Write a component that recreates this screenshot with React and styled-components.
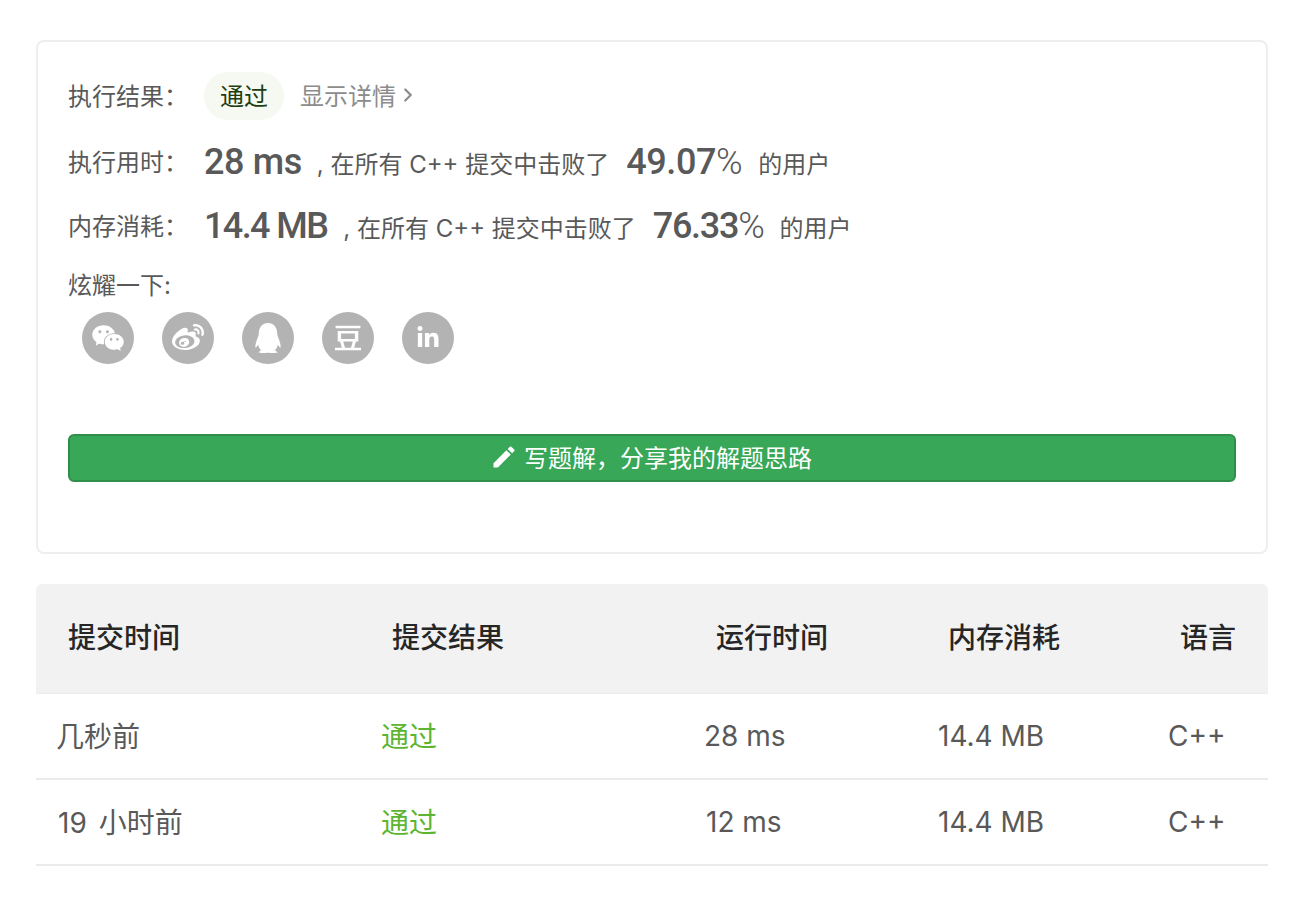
import React from 'react'
import styled, { createGlobalStyle } from 'styled-components'
import { AiFillWechat } from 'react-icons/ai'
import { FaWeibo, FaQq, FaLinkedinIn } from 'react-icons/fa'
import { SiDouban } from 'react-icons/si'
import { MdEdit } from 'react-icons/md'
import { ChevronRight } from 'lucide-react'

const GlobalStyle = createGlobalStyle`
  html, body {
    margin: 0;
    background: #fff;
  }
  body {
    font-family: "Inter", "Noto Sans CJK SC", sans-serif;
    color: #595959;
  }
`

const Page = styled.div`
  width: 1232px;
  padding: 40px 34px 0 36px;
`

const ResultCard = styled.section`
  box-sizing: border-box;
  height: 514px;
  padding: 30px 30px 0;
  border: 2px solid #eeeeee;
  border-radius: 8px;
`

const Row = styled.div`
  display: flex;
  align-items: center;
  height: ${({ $h }) => $h}px;
  margin-bottom: ${({ $mb }) => $mb || 0}px;
`

const Label = styled.span`
  width: 136px;
  flex: none;
  padding-bottom: 3px;
  font-size: 24px;
  color: #595959;
`

const Bubble = styled.span`
  display: flex;
  align-items: center;
  justify-content: center;
  box-sizing: border-box;
  width: 80px;
  height: 48px;
  padding-bottom: 3px;
  border-radius: 24px;
  background: #f6f9f2;
  color: #1d3d10;
  font-size: 24px;
`

const Detail = styled.span`
  display: flex;
  align-items: center;
  margin-left: 16px;
  padding-bottom: 3px;
  font-size: 24px;
  color: #8c8c8c;

  svg {
    margin-left: 1px;
  }
`

const Big = styled.b`
  font-family: "Roboto", "Noto Sans CJK SC", sans-serif;
  font-size: 36px;
  font-weight: 500;
  color: #595959;
  letter-spacing: ${({ $ls }) => $ls}px;
  margin-right: ${({ $mr }) => $mr}px;
`

const Percent = styled.span`
  font-weight: 300;
`

const Small = styled.span`
  font-size: 24px;
  color: #595959;
  margin-right: ${({ $mr }) => $mr || 0}px;
`

const ShareTitle = styled.div`
  font-size: 24px;
  height: 34px;
  line-height: 34px;
  color: #595959;
`

const Socials = styled.div`
  display: flex;
  gap: 28px;
  margin: 9px 0 70px 14px;
`

const Social = styled.span`
  display: flex;
  align-items: center;
  justify-content: center;
  width: 52px;
  height: 52px;
  border-radius: 50%;
  background: #b3b3b3;
  color: #fff;
  font-size: ${({ $size }) => $size}px;
`

const WriteButton = styled.button`
  display: flex;
  align-items: center;
  justify-content: center;
  gap: 6px;
  box-sizing: border-box;
  width: 1168px;
  height: 48px;
  padding: 0 2px 3px 0;
  background: #38a757;
  border: 2px solid #2f8e4a;
  border-radius: 6px;
  color: #fff;
  font-family: inherit;
  font-size: 24px;
`

const Table = styled.div`
  margin-top: 30px;
`

const Grid = styled.div`
  display: grid;
  grid-template-columns: 324px 324px 232px 232px 120px;
  align-items: center;
`

const HeadRow = styled(Grid)`
  height: 110px;
  background: #f2f2f2;
  border-bottom: 1px solid #ebebeb;
  border-radius: 6px 6px 0 0;
  box-sizing: border-box;
  font-size: 28px;
  font-weight: 500;
  color: #262626;
`

const HeadCell = styled.div`
  padding: 0 0 5px 32px;
`

const BodyRow = styled(Grid)`
  height: 86px;
  border-bottom: 2px solid #ebebeb;
  box-sizing: border-box;
  font-size: 28px;
  color: #595959;
`

const Cell = styled.div`
  padding-left: ${({ $pad }) => $pad}px;
  padding-bottom: ${({ $lift }) => $lift || 0}px;
  color: ${({ $ok }) => ($ok ? '#5cb531' : 'inherit')};
`

const TimeCell = styled(Cell)`
  word-spacing: 4px;
`

const results = [
  { time: '几秒前', run: '28 ms', mem: '14.4 MB', lang: 'C++' },
  { time: '19 小时前', run: '12 ms', mem: '14.4 MB', lang: 'C++' },
]

export default function App() {
  return (
    <Page>
      <GlobalStyle />
      <ResultCard>
        <Row $h={48} $mb={20}>
          <Label>执行结果：</Label>
          <Bubble>通过</Bubble>
          <Detail>
            显示详情
            <ChevronRight size={22} strokeWidth={2.5} />
          </Detail>
        </Row>
        <Row $h={44} $mb={20}>
          <Label>执行用时：</Label>
          <Big $ls={-0.4} $mr={15}>
            28 ms
          </Big>
          <Small $mr={17}>, 在所有 C++ 提交中击败了</Small>
          <Big $ls={-0.4} $mr={16}>
            49.07<Percent>%</Percent>
          </Big>
          <Small>的用户</Small>
        </Row>
        <Row $h={44} $mb={21}>
          <Label>内存消耗：</Label>
          <Big $ls={-1.6} $mr={16}>
            14.4 MB
          </Big>
          <Small $mr={17}>, 在所有 C++ 提交中击败了</Small>
          <Big $ls={-1.3} $mr={16}>
            76.33<Percent>%</Percent>
          </Big>
          <Small>的用户</Small>
        </Row>
        <ShareTitle>炫耀一下:</ShareTitle>
        <Socials>
          <Social $size={36}>
            <AiFillWechat />
          </Social>
          <Social $size={32}>
            <FaWeibo />
          </Social>
          <Social $size={30}>
            <FaQq />
          </Social>
          <Social $size={26}>
            <SiDouban />
          </Social>
          <Social $size={24}>
            <FaLinkedinIn />
          </Social>
        </Socials>
        <WriteButton>
          <MdEdit size={28} />
          写题解，分享我的解题思路
        </WriteButton>
      </ResultCard>
      <Table>
        <HeadRow>
          <HeadCell>提交时间</HeadCell>
          <HeadCell>提交结果</HeadCell>
          <HeadCell>运行时间</HeadCell>
          <HeadCell>内存消耗</HeadCell>
          <HeadCell>语言</HeadCell>
        </HeadRow>
        {results.map((r, i) => (
          <BodyRow key={r.time}>
            <TimeCell $pad={i === 0 ? 20 : 22} $lift={3}>
              {r.time}
            </TimeCell>
            <Cell $pad={21} $lift={3} $ok>
              通过
            </Cell>
            <Cell $pad={i === 0 ? 20 : 22}>{r.run}</Cell>
            <Cell $pad={22}>{r.mem}</Cell>
            <Cell $pad={20}>{r.lang}</Cell>
          </BodyRow>
        ))}
      </Table>
    </Page>
  )
}
